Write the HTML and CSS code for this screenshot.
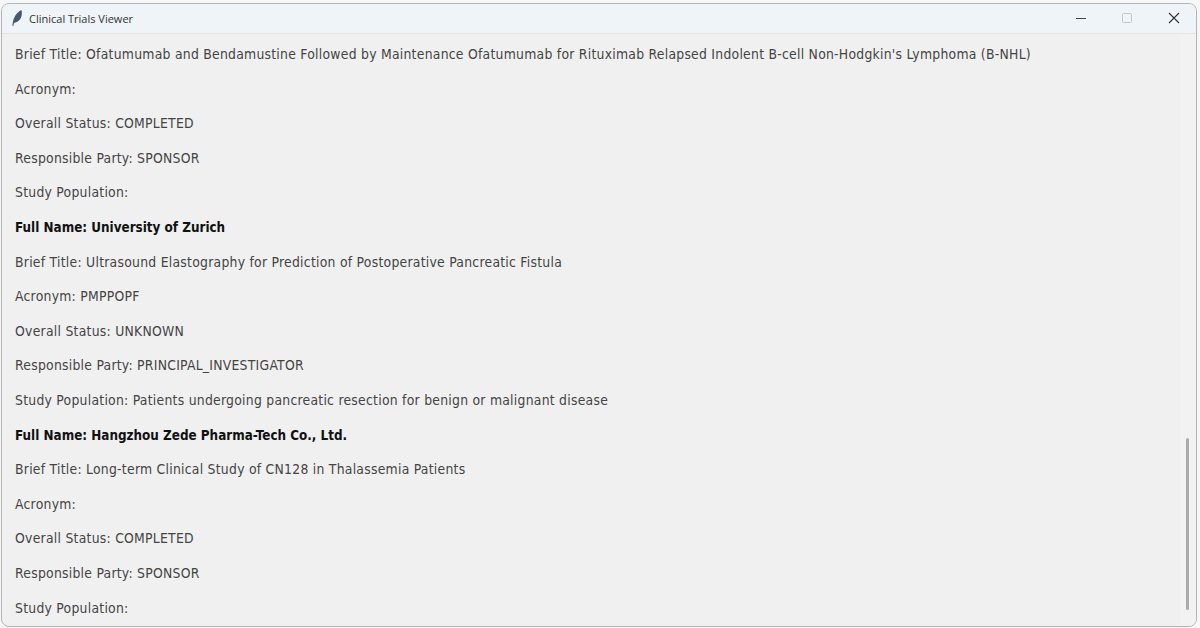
FILE: index.html
```html
<!DOCTYPE html>
<html lang="en">
  <head>
    <meta charset="UTF-8" />
    <title>Clinical Trials Viewer</title>
    <link rel="stylesheet" href="styles.css">
  </head>
  <body>
    <div class="window">
      <div class="titlebar">
        <svg class="app-icon" width="14" height="18" viewBox="0 0 14 18">
          <path d="M2.5 17 C2.6 11 5 4 11.5 1 C12.8 6 11 12 5.5 13.5 L4 14 L3.3 17 Z" fill="#46596e" />
        </svg>
        <span class="title">Clinical Trials Viewer</span>
        <div class="controls">
          <svg class="control" width="46" height="30" viewBox="0 0 46 30">
            <path d="M18 15.5 H28" stroke="#444" stroke-width="1" fill="none" />
          </svg>
          <svg class="control" width="46" height="30" viewBox="0 0 46 30">
            <rect x="18.5" y="10.5" width="9" height="9" rx="1" stroke="#c4c6c8" fill="none" />
          </svg>
          <svg class="control" width="46" height="30" viewBox="0 0 46 30">
            <path d="M19 10 L29 20 M29 10 L19 20" stroke="#333" stroke-width="1.1" fill="none" />
          </svg>
        </div>
      </div>
      <div class="content">
        <div class="rows">
          <p>Brief Title: Ofatumumab and Bendamustine Followed by Maintenance Ofatumumab for Rituximab Relapsed Indolent B-cell Non-Hodgkin's Lymphoma (B-NHL)</p>
          <p>Acronym:</p>
          <p>Overall Status: COMPLETED</p>
          <p>Responsible Party: SPONSOR</p>
          <p>Study Population:</p>
          <p class="name">Full Name: University of Zurich</p>
          <p>Brief Title: Ultrasound Elastography for Prediction of Postoperative Pancreatic Fistula</p>
          <p>Acronym: PMPPOPF</p>
          <p>Overall Status: UNKNOWN</p>
          <p>Responsible Party: PRINCIPAL_INVESTIGATOR</p>
          <p>Study Population: Patients undergoing pancreatic resection for benign or malignant disease</p>
          <p class="name">Full Name: Hangzhou Zede Pharma-Tech Co., Ltd.</p>
          <p>Brief Title: Long-term Clinical Study of CN128 in Thalassemia Patients</p>
          <p>Acronym:</p>
          <p>Overall Status: COMPLETED</p>
          <p>Responsible Party: SPONSOR</p>
          <p>Study Population:</p>
        </div>
        <div class="scrollbar">
          <div class="thumb"></div>
        </div>
      </div>
    </div>
  </body>
</html>
```

FILE: styles.css
```css
html,
body {
  margin: 0;
  height: 100%;
  overflow: hidden;
  background-color: #f7f7f7;
}

body {
  padding: 3px 3px 0 1px;
  box-sizing: border-box;
  height: 628px;
}

.window {
  height: 624px;
  display: flex;
  flex-direction: column;
  border: 1px solid #b4b4b4;
  border-radius: 8px;
  overflow: hidden;
  box-sizing: border-box;
  background-color: #f0f0f0;
}

.titlebar {
  height: 30px;
  flex-shrink: 0;
  display: flex;
  align-items: center;
  padding-left: 8px;
  padding-bottom: 1px;
  box-sizing: border-box;
  background-color: #eff4f9;
  border-bottom: 1px solid #e3e5e7;
}

.app-icon {
  margin-right: 5px;
}

.title {
  font-family: "Open Sans", sans-serif;
  font-size: 11px;
  color: #333;
}

.controls {
  margin-left: auto;
  display: flex;
}

.content {
  flex: 1;
  display: flex;
  min-height: 0;
}

.rows {
  flex: 1;
  padding: 3px 0 0 13px;
  color: #444;
  font-family: "DejaVu Sans Condensed", "DejaVu Sans", sans-serif;
  font-stretch: condensed;
  font-size: 13.8px;
  letter-spacing: 0.26px;
}

.rows p {
  margin: 0;
  height: 34.6px;
  line-height: 34.6px;
  white-space: nowrap;
}

.rows .name {
  font-size: 13.35px;
  font-weight: bold;
  letter-spacing: 0;
  line-height: 36px;
  color: #111;
}

.scrollbar {
  width: 16px;
  flex-shrink: 0;
  padding-top: 404px;
  box-sizing: border-box;
  background-color: #f2f2f2;
}

.thumb {
  width: 3px;
  height: 172px;
  margin-left: 6px;
  border-radius: 2px;
  background-color: #ababab;
}
```
